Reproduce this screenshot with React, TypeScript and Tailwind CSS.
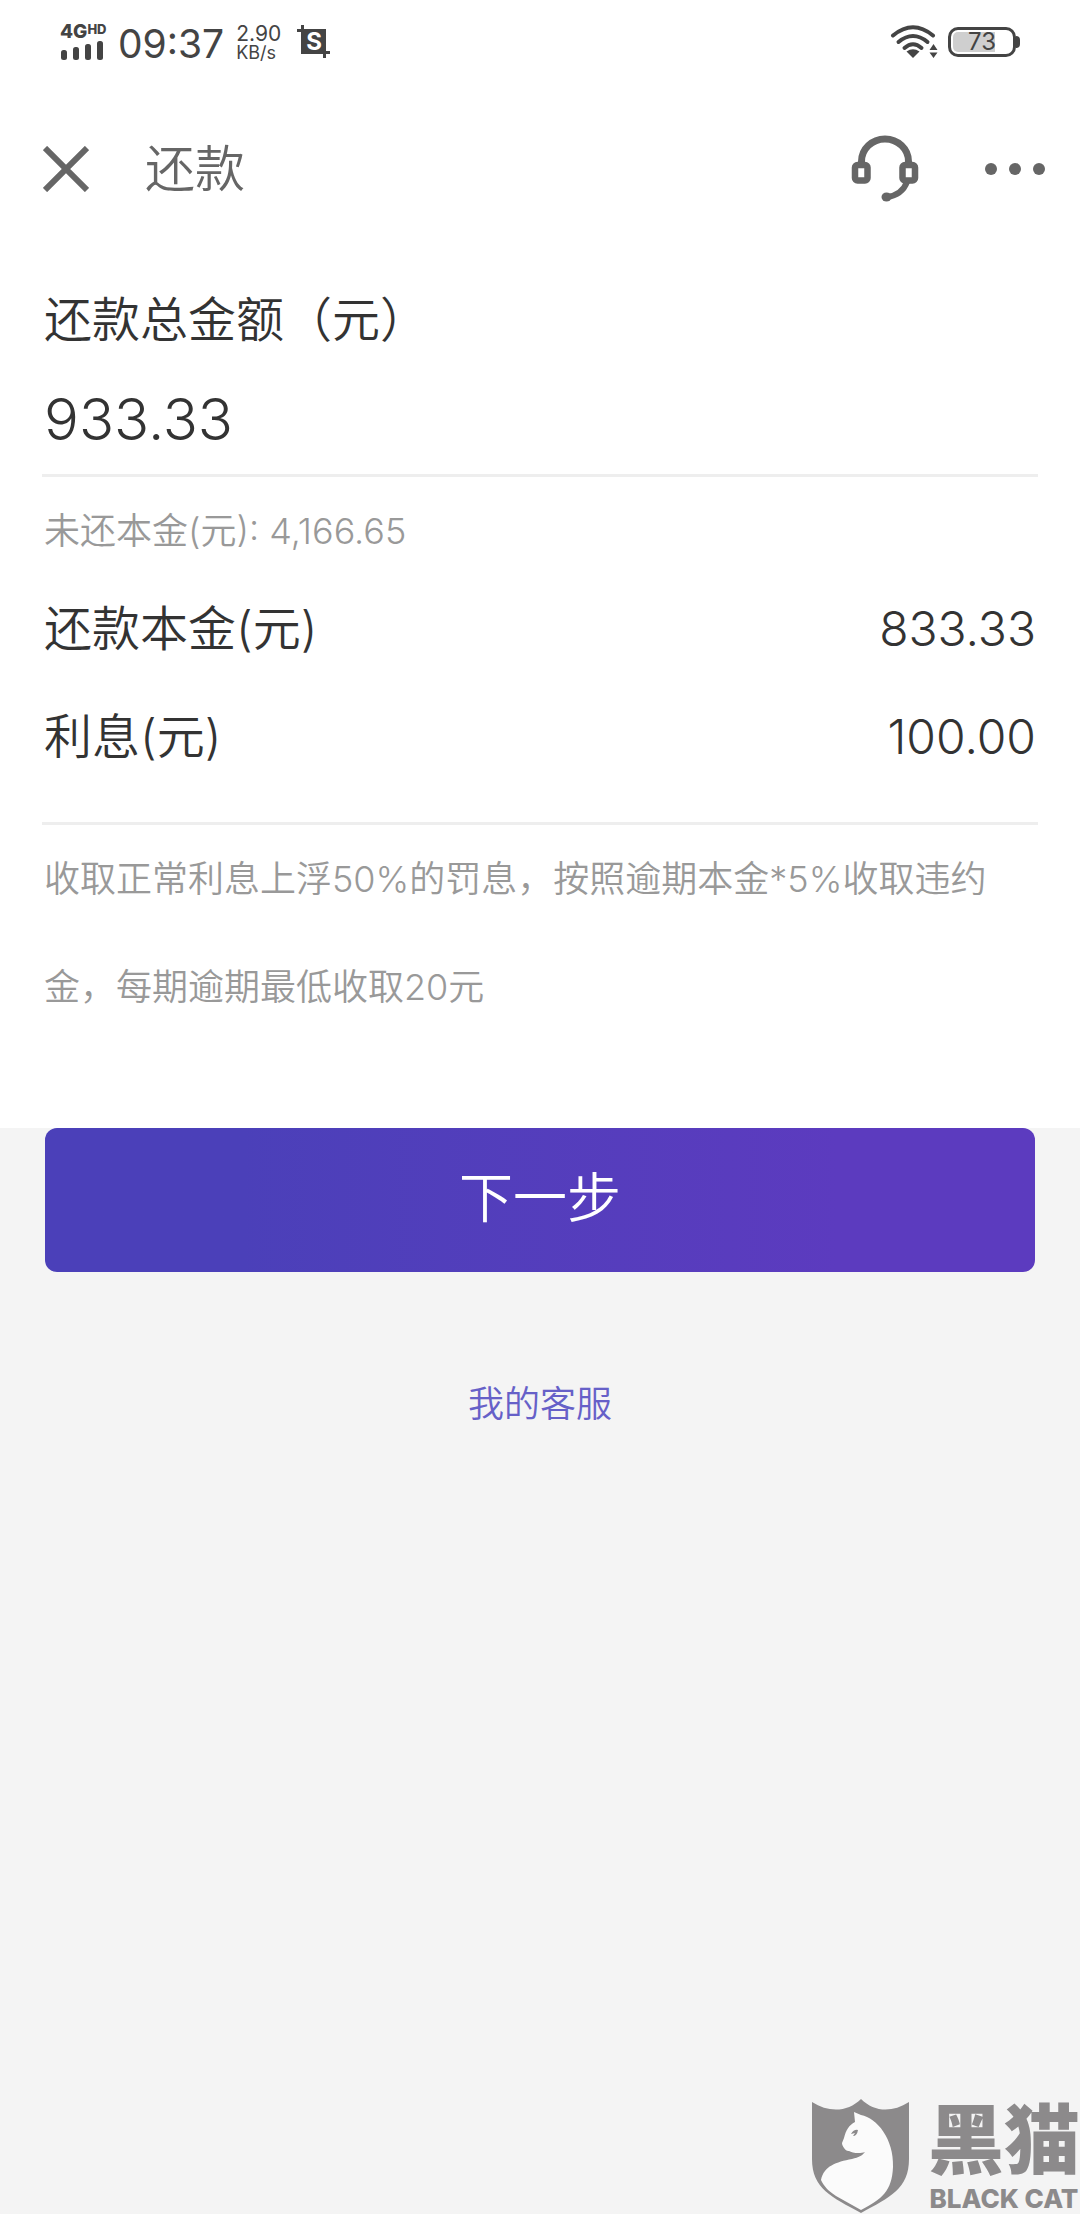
import React from "react";

function SignalIcon() {
  return (
    <div className="flex w-12 flex-col gap-[2px]">
      <div className="flex items-start text-[#444]">
        <span className="text-[19px] leading-[15px] font-extrabold">4G</span>
        <span className="text-[13px] leading-[10px] font-extrabold">HD</span>
      </div>
      <svg className="h-5 w-12" viewBox="0 0 48 20" fill="#444" aria-hidden="true">
        <rect x="1" y="9" width="6" height="10" rx="2.5" />
        <rect x="13" y="6" width="6" height="13" rx="2.5" />
        <rect x="25" y="3" width="6" height="16" rx="2.5" />
        <rect x="37" y="0" width="6" height="19" rx="2.5" />
      </svg>
    </div>
  );
}

function ScreenshotIcon() {
  return (
    <div className="relative flex h-[34px] w-[34px] items-center justify-center">
      <svg className="absolute inset-0" viewBox="0 0 34 34" fill="#444" aria-hidden="true">
        <path d="M4 0h3v4h22v22h4v3h-4v4h-3v-4H4V7H0V4h4z" />
      </svg>
      <span className="relative text-[24px] leading-[34px] font-bold text-white">S</span>
    </div>
  );
}

function WifiIcon() {
  return (
    <svg className="h-[34px] w-12" viewBox="0 0 48 34" fill="none" stroke="#444" strokeWidth="4" strokeLinecap="round" aria-hidden="true">
      <path d="M3 10.500Q23 -6 43 10.500" />
      <path d="M8.500 17Q23 5 37.500 17" />
      <path d="M14.500 23Q23 15.500 31.500 23" />
      <path d="M23 33l-6.500-6.500q6.500-4.500 13 0z" fill="#444" stroke="none" />
      <path d="M43.500 19l4 6h-8zM43.500 33l4-5.500h-8z" fill="#444" stroke="none" />
    </svg>
  );
}

function Battery() {
  return (
    <div className="flex items-center" aria-label="电量 73%">
      <div className="flex h-[30px] w-[68px] rounded-[10px] border-3 border-[#444] p-[2px]">
        <div className="flex flex-1 items-center justify-center rounded-[5px] bg-[linear-gradient(to_right,#cfcfcf_73%,white_73%)]">
          <span className="text-[24px] leading-6 text-[#444]">73</span>
        </div>
      </div>
      <div className="h-3 w-1 rounded-r-full bg-[#444]" />
    </div>
  );
}

function StatusBar() {
  return (
    <div className="flex h-[84px] items-center px-[60px]">
      <SignalIcon />
      <div className="ml-[10px] flex items-center gap-3 pt-1 text-[#444]">
        <span className="text-[39px] leading-[48px]">09:37</span>
        <div className="flex flex-col">
          <span className="text-[21px] leading-[18px]">2.90</span>
          <span className="text-[18px] leading-[20px]">KB/s</span>
        </div>
      </div>
      <div className="ml-4">
        <ScreenshotIcon />
      </div>
      <div className="ml-auto flex items-center gap-[10px]">
        <WifiIcon />
        <Battery />
      </div>
    </div>
  );
}

function NavBar() {
  return (
    <header className="flex h-[170px] items-center pr-[35px] pl-[43px] text-[#666]">
      <button type="button" aria-label="关闭">
        <svg className="h-[46px] w-[46px]" viewBox="0 0 46 46" stroke="#666" strokeWidth="6" aria-hidden="true">
          <path d="M2 2l42 42M44 2L2 44" />
        </svg>
      </button>
      <h1 className="ml-14 text-[50px] leading-[60px] font-[350]">还款</h1>
      <button type="button" aria-label="客服" className="ml-auto">
        <svg className="h-[68px] w-[68px]" viewBox="0 0 68 68" fill="none" stroke="#666" aria-hidden="true">
          <path d="M10.500 29V26.500a23.500 22.500 0 0 1 47 0V29" strokeWidth="7" />
          <rect x="4" y="30" width="12.500" height="15.500" rx="2.500" strokeWidth="6.500" />
          <rect x="51.500" y="30" width="12.500" height="15.500" rx="2.500" strokeWidth="6.500" />
          <path d="M56 47Q51 60 36 62" strokeWidth="6" />
          <ellipse cx="35.500" cy="62" rx="5" ry="4.500" fill="#666" stroke="none" />
        </svg>
      </button>
      <button type="button" aria-label="更多" className="ml-[66px]">
        <svg className="h-3 w-[60px]" viewBox="0 0 60 12" fill="#666" aria-hidden="true">
          <circle cx="6" cy="6" r="6" />
          <circle cx="30" cy="6" r="6" />
          <circle cx="54" cy="6" r="6" />
        </svg>
      </button>
    </header>
  );
}

function Row({ label, value }: { label: string; value: string }) {
  return (
    <div className="flex justify-between text-[48px] leading-[108px]">
      <dt>{label}</dt>
      <dd>{value}</dd>
    </div>
  );
}

function Watermark() {
  return (
    <div className="mt-auto flex items-end justify-end gap-[18px] text-[#8c8a8b]">
      <svg className="h-[115px] w-[98px]" viewBox="0 0 98 115" aria-hidden="true">
        <path
          d="M0 3C17 14 36 13 49 0C62 13 80 14 97 3V60C97 90 78 98 49 114C20 98 0 90 0 60Z"
          fill="#8c8a8b"
        />
        <path
          d="M42 13L49 16C65 19 82 40 81 68C80 92 70 100 49 111L24 97C15 91 12 87 9 81C12 67 24 63 40 60C47 58 50 57 53 53C48 55 40 54 37 52C34 53 30 47 30 44L32 39C34 31 37 26 43 23Z"
          fill="#fbfbfb"
        />
        <path d="M39 35Q42 30 46 31Q45 37 41 37L43 34Z" fill="#8c8a8b" />
      </svg>
      <div className="flex flex-col items-center">
        <span className="text-[76px] leading-[88px] font-black">黑猫</span>
        <span className="text-[26px] leading-[30px] font-extrabold whitespace-nowrap">BLACK CAT</span>
      </div>
    </div>
  );
}

export default function App() {
  return (
    <div className="flex min-h-screen flex-col bg-[#f4f4f4] font-['Inter','Noto_Sans_CJK_SC',sans-serif]">
      <div className="bg-white">
        <StatusBar />
        <NavBar />
        <main className="mx-[42px] pt-3 pb-[87px] font-[350] text-[#333]">
          <section className="border-b-3 border-[#eee] px-[2px] pb-[10px]">
            <h2 className="text-[48px] leading-[108px]">还款总金额（元）</h2>
            <p className="text-[58px] leading-[90px] font-light">933.33</p>
          </section>
          <section className="border-b-3 border-[#eee] px-[2px] pb-[31px]">
            <p className="pt-[10px] text-[36px] leading-[88px] text-[#999]">未还本金(元): 4,166.65</p>
            <dl>
              <Row label="还款本金(元)" value="833.33" />
              <Row label="利息(元)" value="100.00" />
            </dl>
          </section>
          <p className="px-[2px] text-[36px] leading-[108px] text-[#999]">
            收取正常利息上浮50%的罚息，按照逾期本金*5%收取违约金，每期逾期最低收取20元
          </p>
        </main>
      </div>
      <button
        type="button"
        className="mx-[45px] h-36 rounded-xl bg-linear-to-r from-[#4b40b9] from-20% to-[#5c3bbf] to-80% pb-1 text-[54px] font-[350] text-white"
      >
        下一步
      </button>
      <a href="#service" className="mt-[104px] self-center text-[36px] leading-[56px] font-[350] text-[#6660c8]">
        我的客服
      </a>
      <Watermark />
    </div>
  );
}
